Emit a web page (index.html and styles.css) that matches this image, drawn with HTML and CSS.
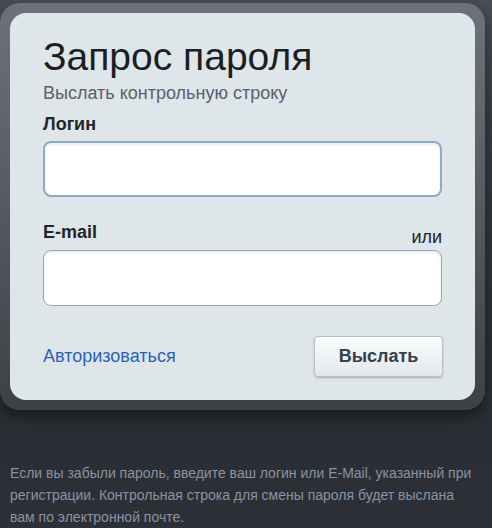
FILE: index.html
```html
<!DOCTYPE html>
<html lang="ru">
<head>
<meta charset="utf-8">
<title>Запрос пароля</title>
<link rel="stylesheet" href="styles.css">
</head>
<body>
<div class="frame">
  <form class="card">
    <h1 class="title">Запрос пароля</h1>
    <p class="subtitle">Выслать контрольную строку</p>
    <label class="label">Логин</label>
    <input class="field field-focus" type="text">
    <div class="label-row">
      <label class="label">E-mail</label>
      <span class="or">или</span>
    </div>
    <input class="field" type="text">
    <div class="actions">
      <a class="link" href="#">Авторизоваться</a>
      <button class="btn" type="button">Выслать</button>
    </div>
  </form>
</div>
<p class="note">Если вы забыли пароль, введите ваш логин или E-Mail, указанный при регистрации. Контрольная строка для смены пароля будет выслана вам по электронной почте.</p>
</body>
</html>
```
FILE: styles.css
```css
html, body {
  margin: 0;
  padding: 0;
}
body {
  width: 492px;
  height: 528px;
  overflow: hidden;
  font-family: "Liberation Sans", Arial, sans-serif;
  background: linear-gradient(180deg, #4a4d53 0px, #3a3d43 120px, #2f3238 300px, #2a2d33 420px, #2d3036 528px);
}
.frame {
  margin-top: 3px;
  width: 465px;
  padding: 10px;
  border-radius: 20px;
  background: linear-gradient(180deg, #6c727b 0%, #555a62 50%, #3c4047 100%);
  box-shadow: 0 6px 14px rgba(0,0,0,0.45);
}
.card {
  display: flex;
  flex-direction: column;
  background: #dfe6e9;
  border-radius: 16px;
  padding: 22px 33px 23px 33px;
  margin: 0;
}
.title {
  margin: 0;
  font-weight: normal;
  font-size: 39px;
  line-height: 44px;
  color: #1c1e22;
}
.subtitle {
  margin: 0;
  font-size: 18px;
  line-height: 28px;
  color: #59606a;
}
.label {
  font-weight: bold;
  font-size: 18px;
  line-height: 22px;
  color: #222629;
}
.card > .label {
  margin-top: 6px;
}
.field {
  box-sizing: border-box;
  width: 100%;
  height: 56px;
  margin: 6px 0 0 0;
  border: 1px solid #9aa6b6;
  border-radius: 8px;
  background: #fff;
  box-shadow: inset 0 2px 3px rgba(0,0,0,0.08);
  outline: none;
}
.field-focus {
  border: 2px solid #8eaacb;
}
.label-row {
  display: flex;
  justify-content: space-between;
  align-items: flex-end;
  margin-top: 24px;
}
.label-row .label {
  margin-bottom: 5px;
}
.or {
  font-size: 18px;
  line-height: 22px;
  color: #1f2226;
}
.label-row + .field {
  margin-top: 2px;
}
.actions {
  display: flex;
  justify-content: space-between;
  align-items: center;
  margin-top: 30px;
}
.link {
  font-size: 18px;
  color: #2c5fbd;
  text-decoration: none;
}
.btn {
  box-sizing: border-box;
  width: 129px;
  height: 41px;
  margin-right: -1px;
  border: 1px solid #b9c1c7;
  border-radius: 4px;
  background: linear-gradient(180deg, #fbfcfc 0%, #e2e8eb 100%);
  box-shadow: 0 1px 2px rgba(0,0,0,0.25);
  font-family: "Liberation Sans", Arial, sans-serif;
  font-weight: bold;
  font-size: 18px;
  color: #363f4a;
  padding: 0;
}
.note {
  margin: 52px 0 0 10px;
  width: 470px;
  font-size: 14px;
  line-height: 22px;
  color: #8993a6;
}
```
